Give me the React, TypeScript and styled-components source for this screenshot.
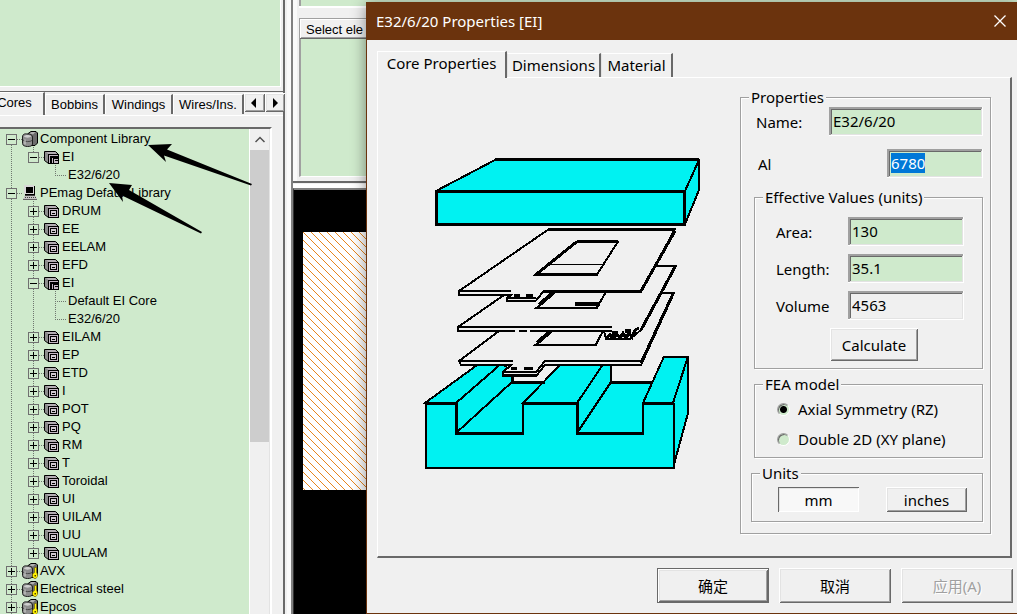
import React, { useEffect, useRef } from 'react';
import styled, { createGlobalStyle, css } from 'styled-components';

const face = '#f0f0f0';
const mint = '#cfeacc';
const shade = '#a0a0a0';
const dark = '#696969';
const light = '#e3e3e3';

const raised = css`
  box-shadow: inset 1px 1px #fff, inset -1px -1px ${dark}, inset 2px 2px ${light}, inset -2px -2px ${shade};
`;
const sunken = css`
  box-shadow: inset -1px -1px #fff, inset 2px 2px ${shade}, inset -2px -2px ${light}, inset 3px 3px ${dark};
`;

const GlobalStyle = createGlobalStyle`
  * { box-sizing: border-box; }
  body { margin: 0; background: ${face}; overflow: hidden; }
  button, input { font: inherit; color: inherit; border: 0; padding: 0; margin: 0; border-radius: 0; }
  ul { list-style: none; margin: 0; padding: 0; }
`;

const Desktop = styled.div`
  position: relative;
  display: flex;
  height: 100vh;
  overflow: hidden;
  background: ${face};
  color: #000;
  font: 13px/18px "Liberation Sans", Arial, sans-serif;
`;

/* ---------- library side bar ---------- */

const Sidebar = styled.aside`
  display: flex;
  flex-direction: column;
  flex: none;
  width: 285px;
  border-right: 2px solid ${dark};
`;

const Preview = styled.div`
  flex: none;
  height: 91px;
  background: ${mint};
  border: solid ${face};
  border-width: 0 2px 4px 0;
  box-shadow: inset -1px -1px #fff;
`;

const PreviewEdge = styled.div`
  flex: none;
  height: 1px;
  background: ${dark};
`;

const LibraryTabs = styled.div`
  display: flex;
  align-items: flex-start;
  flex: none;
  height: 23px;
  margin-left: -8px;
  margin-right: -2px;
`;

const LibraryTab = styled.button<{ $active?: boolean; $width: number }>`
  width: ${p => p.$width}px;
  height: ${p => (p.$active ? 23 : 20)}px;
  margin-top: ${p => (p.$active ? 0 : 2)}px;
  padding: ${p => (p.$active ? '0 7px 3px 0' : '0')};
  background: ${face};
  border-top: 1px solid #fff;
  border-left: 1px solid #fff;
  border-right: 2px solid ${dark};
  white-space: nowrap;
  text-align: center;
`;

const SpinButton = styled.button`
  flex: 1;
  height: 19px;
  margin-top: 1px;
  background: ${face};
  display: grid;
  place-items: center;
  ${raised}
`;

const LibraryPage = styled.div`
  flex: 1;
  min-height: 0;
  display: flex;
  border-top: 1px solid #fff;
  padding: 11px 11px 0 0;
`;

const TreeFrame = styled.div`
  flex: 1;
  min-width: 0;
  display: flex;
  border-top: 2px solid ${dark};
  border-right: 2px solid #fff;
  background: ${mint};
`;

const Tree = styled.ul`
  flex: 1;
  min-width: 0;
  overflow: hidden;
`;

const TreeRow = styled.li`
  display: flex;
  height: 18px;
  white-space: nowrap;
`;

const TreeIcon = styled.span`
  flex: none;
  width: 16px;
  height: 18px;
  margin-right: 2px;
  svg { display: block; }
`;

const TreeLabel = styled.span<{ $leaf: boolean }>`
  padding-left: ${p => (p.$leaf ? 2 : 0)}px;
  line-height: 20px;
`;

const Expander = styled.button`
  flex: none;
  width: 22px;
  height: 18px;
  background: none;
  svg { display: block; }
`;

const Guide = styled.span`
  flex: none;
  width: 22px;
  height: 18px;
  svg { display: block; }
`;

const ScrollBar = styled.div`
  flex: none;
  display: flex;
  flex-direction: column;
  width: 21px;
  background: ${face};
  border-left: 1px solid #fff;
  border-right: 1px solid ${light};
`;

const ScrollUp = styled.button`
  flex: none;
  height: 21px;
  background: ${face};
  display: grid;
  place-items: center;
`;

const ScrollTrack = styled.div`
  flex: 1;
`;

const ScrollThumb = styled.div`
  width: 19px;
  height: 63%;
  background: #cdcdcd;
`;

/* ---------- work area ---------- */

const WorkArea = styled.main`
  flex: 1;
  min-width: 0;
  display: flex;
  flex-direction: column;
  margin-left: 6px;
  border-left: 2px solid #808080;
  box-shadow: -4px 0 0 #fafafa;
`;

const UpperPanes = styled.div`
  flex: none;
  display: flex;
  flex-direction: column;
  height: 183px;
  padding: 0 0 4px 6px;
  border-bottom: 2px solid ${dark};
  box-shadow: inset 4px 0 #fafafa;
`;

const PaneStrip = styled.div`
  height: 6px;
  margin-bottom: 12px;
  background: ${mint};
  border-left: 2px solid ${shade};
  box-shadow: 0 2px #fff;
`;

const ListHeader = styled.div`
  height: 21px;
  padding: 3px 6px 0;
  border-left: 1px solid ${shade};
  background: ${face};
  box-shadow: inset 0 1px ${shade}, inset 0 -1px ${dark}, inset 1px 2px #fff, inset 0 -2px ${shade};
`;

const ListBody = styled.div`
  flex: 1;
  background: ${mint};
  border-left: 2px solid ${shade};
  border-bottom: 1px solid #fff;
`;

const Canvas = styled.div`
  flex: 1;
  margin-top: 5px;
  padding: 42px 0 0 9px;
  background: #000;
  border-top: 2px solid #808080;
  border-left: 1px solid #333;
  box-shadow: 0 -4px #fff;
  svg { display: block; width: 100%; height: 258px; }
`;

/* ---------- properties dialog ---------- */

const Dialog = styled.section`
  position: absolute;
  top: 2px;
  left: 366px;
  right: 0;
  border-left: 1px solid #6b330d;
  border-bottom: 1px solid #6b330d;
  background: ${face};
  box-shadow: 0 2px 14px rgba(0, 0, 0, 0.45);
  font: 15px/20px "Noto Sans", "Noto Sans CJK SC", sans-serif;
`;

const TitleBar = styled.header`
  display: flex;
  align-items: center;
  justify-content: space-between;
  height: 38px;
  padding: 0 10px 0 9px;
  background: #6b330d;
  color: #fff;
`;

const Title = styled.h1`
  margin: 0;
  font: inherit;
`;

const CloseButton = styled.button`
  width: 14px;
  height: 14px;
  background: none;
  svg { display: block; }
`;

const DialogBody = styled.div`
  padding: 11px 5px 0 10px;
`;

const DialogTabs = styled.div`
  display: flex;
  align-items: flex-end;
  height: 26px;
`;

const DialogTab = styled.button<{ $active?: boolean; $width: number }>`
  position: relative;
  width: ${p => p.$width}px;
  height: ${p => (p.$active ? 27 : 24)}px;
  margin-bottom: ${p => (p.$active ? -1 : 0)}px;
  padding-bottom: ${p => (p.$active ? 5 : 2)}px;
  background: ${face};
  border-top: 1px solid #fff;
  border-left: 1px solid ${p => (p.$active ? '#fff' : light)};
  border-right: 2px solid ${dark};
  white-space: nowrap;
`;

const TabPage = styled.div`
  display: flex;
  justify-content: space-between;
  align-items: flex-start;
  padding: 10px 19px 22px 42px;
  border-top: 1px solid #fff;
  border-left: 1px solid #fff;
  border-right: 2px solid ${dark};
  border-bottom: 2px solid ${dark};
`;

const CoreDrawing = styled.svg`
  flex: none;
  margin-top: 64px;
`;

const Group = styled.fieldset<{ $pad: string; $width?: number; $indent?: number; $gap?: number; $top?: number }>`
  display: flex;
  flex-direction: column;
  gap: ${p => p.$gap ?? 0}px;
  min-width: 0;
  width: ${p => (p.$width ? `${p.$width}px` : 'auto')};
  margin: ${p => p.$top ?? 0}px 0 0 ${p => p.$indent ?? 0}px;
  padding: ${p => p.$pad};
  border: 1px solid ${shade};
  box-shadow: 1px 1px #fff, inset 1px 1px #fff;
`;

const Legend = styled.legend<{ $shift?: number }>`
  height: 19px;
  margin-left: ${p => p.$shift ?? 0}px;
  padding: 0 2px;
  line-height: 19px;
  background: ${face};
`;

const Field = styled.div<{ $indent: number; $after?: number }>`
  display: flex;
  align-items: center;
  justify-content: space-between;
  height: 29px;
  padding-left: ${p => p.$indent}px;
  margin-bottom: ${p => p.$after ?? 0}px;
`;

const TextBox = styled.input<{ $width: number }>`
  width: ${p => p.$width}px;
  height: 29px;
  padding: 2px 4px 4px;
  outline: none;
  background: ${mint};
  ${sunken}
  &:read-only { background: ${face}; }
  &::selection { background: #0078d7; color: #fff; }
`;

const PushButton = styled.button<{ $width: number; $height: number; $primary?: boolean }>`
  width: ${p => p.$width}px;
  height: ${p => p.$height}px;
  background: ${face};
  ${raised}
  ${p => p.$primary && css`
    border: 1px solid ${dark};
  `}
  &[aria-pressed='true'] {
    background: #f8f8f8;
    box-shadow: inset 1px 1px ${dark}, inset -1px -1px #fff, inset 2px 2px ${light};
  }
  &:disabled {
    color: ${shade};
    text-shadow: 1px 1px #fff;
  }
`;

const CalculateRow = styled.div`
  display: flex;
  margin-left: 75px;
`;

const RadioRow = styled.label`
  display: flex;
  align-items: center;
  gap: 8px;
  height: 20px;
  white-space: nowrap;
`;

const Radio = styled.input`
  appearance: none;
  width: 13px;
  height: 13px;
  border: 1px solid;
  border-color: ${shade} #fff #fff ${shade};
  border-radius: 50%;
  background: ${mint};
  box-shadow: inset 1px 1px ${dark};
  &:checked {
    background: radial-gradient(circle, #000 0 3px, ${mint} 4px);
  }
`;

const ButtonPair = styled.div`
  display: flex;
  justify-content: space-between;
`;

const Footer = styled.footer`
  display: flex;
  justify-content: flex-end;
  gap: 10px;
  padding: 10px 4px 10px;
`;

const Annotations = styled.svg`
  position: absolute;
  left: 0;
  top: 0;
  pointer-events: none;
`;

/* ---------- tree data ---------- */

type Kind = 'library' | 'locked' | 'computer' | 'core' | 'open' | 'leaf';
type Node = { label: string; level: number; kind: Kind };

const n = (level: number, kind: Kind, label: string): Node => ({ level, kind, label });

const nodes: Node[] = [
  n(0, 'library', 'Component Library'),
  n(1, 'open', 'EI'),
  n(2, 'leaf', 'E32/6/20'),
  n(0, 'computer', 'PEmag Default Library'),
  ...['DRUM', 'EE', 'EELAM', 'EFD'].map(t => n(1, 'core', t)),
  n(1, 'open', 'EI'),
  n(2, 'leaf', 'Default EI Core'),
  n(2, 'leaf', 'E32/6/20'),
  ...['EILAM', 'EP', 'ETD', 'I', 'POT', 'PQ', 'RM', 'T', 'Toroidal', 'UI', 'UILAM', 'UU', 'UULAM'].map(t => n(1, 'core', t)),
  n(0, 'locked', 'AVX'),
  n(0, 'locked', 'Electrical steel'),
  n(0, 'locked', 'Epcos'),
];

const continues = (index: number, level: number) => {
  for (let i = index + 1; i < nodes.length; i++) {
    if (nodes[i].level === level) return true;
    if (nodes[i].level < level) return false;
  }
  return level === 0;
};

function GuideLines({ up, down, across, box }: { up: boolean; down: boolean; across: boolean; box?: 'plus' | 'minus' }) {
  return (
    <svg width="22" height="18" shapeRendering="crispEdges" fill="none" stroke="#707870" aria-hidden="true">
      {up && <path d="M11.5 0V10" strokeDasharray="1 1" />}
      {down && <path d="M11.5 10V18" strokeDasharray="1 1" />}
      {across && <path d="M11 10.5H22" strokeDasharray="1 1" />}
      {box && (
        <>
          <rect x="6.5" y="5.5" width="10" height="10" fill={mint} stroke="#707070" />
          <path d={box === 'plus' ? 'M8 10.5h7M11.5 7v7' : 'M8 10.5h7'} stroke="#000" />
        </>
      )}
    </svg>
  );
}

function KindIcon({ kind }: { kind: Kind }) {
  if (kind === 'core' || kind === 'open') {
    return (
      <svg width="16" height="18" aria-hidden="true">
        <path d="M.5 4.500H11.500L14.500 7.500V16.500H4.500L.5 13.500z" fill="#8c8c8c" stroke="#000" />
        <path d="M2 5H11L13 7H4.500z" fill="#b4aeb4" />
        <g shapeRendering="crispEdges">
          <rect x="4.500" y="7.500" width="10" height="9" fill="#c4b8c4" stroke="#000" />
          {kind === 'core' ? (
            <>
              <rect x="6.500" y="9.500" width="6" height="5" fill="#d0c8d0" stroke="#000" />
              <path d="M8 12h3" stroke="#000" />
            </>
          ) : (
            <>
              <path d="M6 9h8v2H8v5H6z" fill="#000" />
              <path d="M9 11.500h5M9.500 11v5M11 13.500h3" stroke="#000" />
            </>
          )}
        </g>
      </svg>
    );
  }
  if (kind === 'computer') {
    return (
      <svg width="16" height="18" shapeRendering="crispEdges" aria-hidden="true">
        <path d="M3 3h10v9H3z" fill="#000" />
        <path d="M2 2h10v9H2z" fill="#d8d8d8" />
        <path d="M4 4h7v6H4z" fill="#000" />
        <path d="M3 12h10l2 4H1z" fill="#c4c4c4" />
        <path d="M3 12.500h10M3 14.500h1m1 0h1m1 0h1m1 0h1m1 0h1m1 0h1" stroke="#404040" />
        <path d="M1 16.500h14" stroke="#606060" />
      </svg>
    );
  }
  return (
    <svg width="16" height="18" aria-hidden="true">
      <path d="M5.500 5L9 2.500H14L15.500 4V14L13 16.500H9z" fill="#6c6c6c" stroke="#000" />
      <path d="M7 4.500L9.500 3H13.500L11 5.500z" fill="#b0b0b0" />
      <path d="M.5 8C.5 5 3 4.500 5 5C8 4.500 10.500 6 10.500 8V15C10.500 17 8 17.500 5.500 17.500C3 17.500 .5 16.500 .5 14.500z" fill="#8e8e8e" stroke="#202020" />
      <path d="M2 7.500C3 5.500 8 5.500 9 7.500C8 9 3 9 2 7.500z" fill="#cecece" />
      <path d="M1 11C3 13 8 13 10 11.500" fill="none" stroke="#484848" />
      <path d="M3 10.500V15.500" stroke="#d4d4d4" />
      {kind === 'locked' && (
        <>
          <path d="M12.500 6.500H14.500V11.500L15.500 13V15.500L14 17.500H12L10.500 15.500V13L12.500 11.500z" fill="#fff000" stroke="#504800" strokeWidth=".5" />
          <path d="M12.500 14h1.500v1.500h-1.500z" fill="#504800" />
        </>
      )}
    </svg>
  );
}

function LibraryTree() {
  return (
    <Tree>
      {nodes.map((node, i) => {
        const leaf = node.kind === 'leaf';
        const lines = {
          up: i > 0,
          down: continues(i, node.level),
          across: true,
        };
        return (
          <TreeRow key={i}>
            {Array.from({ length: node.level }, (_, l) => {
              const on = continues(i, l);
              return (
                <Guide key={l}>
                  <GuideLines up={on} down={on} across={false} />
                </Guide>
              );
            })}
            {leaf ? (
              <Guide>
                <GuideLines {...lines} />
              </Guide>
            ) : (
              <Expander aria-label={`Toggle ${node.label}`}>
                <GuideLines
                  {...lines}
                  box={node.kind === 'core' || node.kind === 'locked' ? 'plus' : 'minus'}
                />
              </Expander>
            )}
            {!leaf && (
              <TreeIcon>
                <KindIcon kind={node.kind} />
              </TreeIcon>
            )}
            <TreeLabel $leaf={leaf}>{node.label}</TreeLabel>
          </TreeRow>
        );
      })}
    </Tree>
  );
}

/* ---------- exploded core drawing ---------- */

function ExplodedCore() {
  return (
    <CoreDrawing width="286" height="322" viewBox="420 152 286 322" role="img" aria-label="EI core exploded view">
      <g fill="#00f2f2" stroke="#000" strokeWidth="2" shapeRendering="crispEdges">
        <path d="M436 191L495 160H699L685 191z" />
        <path d="M685 191L699 160V190L685 224z" />
        <path d="M495 159.500H699" strokeWidth="3" />
        <rect x="436.500" y="191.500" width="248" height="33" strokeWidth="3" />

        <path d="M425 403L480 363H502L456 403z" />
        <path d="M456 403L502 363L512 372V382L456 433z" />
        <path d="M456 433L512 382H545L523 403V433z" />
        <path d="M512 364L562 364L545 381H512z" fill={face} stroke="none" />
        <path d="M523 403L562 363H604L577 403z" />
        <path d="M577 403L604 363H611V382L577 433z" />
        <path d="M577 433L611 382H653L643 403V433z" />
        <path d="M512 382H545M611 382H653" strokeWidth="3" />
        <path d="M512.500 374V382" />
        <path d="M643 403L664 356.500H688L673 403z" />
        <path d="M673 403L688 356.500V413L673 468z" />
        <path d="M425.500 403.500H456V433.500H523V403.500H577V433.500H643V403.500H673.500V468H425.500z" />
        <path d="M456 403V433.500H523M577 403V433.500H643" fill="none" strokeWidth="3" />
      </g>

      <g fill={face} stroke="#000" strokeWidth="2" shapeRendering="crispEdges">
        <path d="M459 361L499 331L550 293H674L641 365H545L536 376H503V372L511 365H461z" />
        <path d="M673 294L641 363" strokeWidth="3" />
        <path d="M459 361H513M503 372H536L545 361H641" fill="none" />
        <path d="M503 375.500H536" fill="none" strokeWidth="3" />
        <path d="M511 368h6M524 368h9" strokeWidth="3" />
        <path d="M536 344.500L556 327H605L596 344.500z" />
        <path d="M537 343L552 330" strokeWidth="4" />

        <path d="M458 327L504 295L549 266H676L641 330L630 339H606L604 331H458z" />
        <path d="M675 267L641 330" strokeWidth="3" />
        <path d="M458 327H612M458 331H612" fill="none" />
        <path d="M606 338l4-3 3 3 4-4 3 4 3-5 3 5 3-5 3 4 3-7 4-2" fill="none" strokeWidth="3" />
        <path d="M612 333h6M625 331h6" strokeWidth="4" />
        <path d="M537 307.500L557 290H607L597 307.500z" />
        <path d="M539 305L554 292" strokeWidth="4" />
        <path d="M575 303.500H600" strokeWidth="4" />
        <path d="M515 331h4M527 331h3" stroke={face} />

        <path d="M459 291L549 229H675L641 292H543L536 300.500H507V298L511 295H459z" />
        <path d="M459 291H511M507 298H536" fill="none" />
        <path d="M549 229.500H675M543 291.500H641" strokeWidth="3" />
        <path d="M675 231L641 291" strokeWidth="3" />
        <path d="M514 296h6M526 296h7" strokeWidth="4" />
        <path d="M536 274.500L577 241.500H618L597 274.500z" />
        <path d="M536 274.500L577 241.500M577 241.500H618M536 274.500H597" strokeWidth="3" />
        <path d="M551 264.500H602" strokeWidth="1" />
      </g>
    </CoreDrawing>
  );
}

function PropertiesDialog() {
  const al = useRef<HTMLInputElement>(null);
  useEffect(() => {
    al.current?.focus();
    al.current?.select();
  }, []);

  return (
    <Dialog role="dialog" aria-labelledby="dialog-title">
      <TitleBar>
        <Title id="dialog-title">E32/6/20 Properties [EI]</Title>
        <CloseButton aria-label="Close">
          <svg width="14" height="14" fill="none" stroke="#fff" strokeWidth="1.300">
            <path d="M1.500 1.500l11 11M12.500 1.500l-11 11" />
          </svg>
        </CloseButton>
      </TitleBar>
      <DialogBody>
        <DialogTabs role="tablist">
          <DialogTab role="tab" aria-selected="true" $active $width={130}>Core Properties</DialogTab>
          <DialogTab role="tab" $width={94}>Dimensions</DialogTab>
          <DialogTab role="tab" $width={72}>Material</DialogTab>
        </DialogTabs>
        <TabPage>
          <ExplodedCore />
          <Group $width={251} $pad="0 7px 11px 10px">
            <Legend $shift={-2}>Properties</Legend>
            <Field $indent={5} $after={13}>
              <label htmlFor="name">Name:</label>
              <TextBox id="name" $width={154} defaultValue="E32/6/20" />
            </Field>
            <Field $indent={7} $after={10}>
              <label htmlFor="al">Al</label>
              <TextBox id="al" ref={al} $width={96} defaultValue="6780" />
            </Field>
            <Group $indent={3} $gap={8} $pad="10px 18px 7px 0">
              <Legend $shift={8}>Effective Values (units)</Legend>
              <Field $indent={21}>
                <label htmlFor="area">Area:</label>
                <TextBox id="area" $width={116} defaultValue="130" />
              </Field>
              <Field $indent={21}>
                <label htmlFor="length">Length:</label>
                <TextBox id="length" $width={116} defaultValue="35.1" />
              </Field>
              <Field $indent={21}>
                <label htmlFor="volume">Volume</label>
                <TextBox id="volume" $width={116} defaultValue="4563" readOnly />
              </Field>
              <CalculateRow>
                <PushButton $width={88} $height={33}>Calculate</PushButton>
              </CalculateRow>
            </Group>
            <Group $indent={3} $top={6} $gap={10} $pad="5px 0 8px 22px">
              <Legend $shift={-14}>FEA model</Legend>
              <RadioRow><Radio type="radio" name="fea" defaultChecked />Axial Symmetry (RZ)</RadioRow>
              <RadioRow><Radio type="radio" name="fea" />Double 2D (XY plane)</RadioRow>
            </Group>
            <Group $top={6} $pad="4px 15px 9px 26px">
              <Legend $shift={-18}>Units</Legend>
              <ButtonPair>
                <PushButton $width={81} $height={25} aria-pressed="true">mm</PushButton>
                <PushButton $width={81} $height={25} aria-pressed="false">inches</PushButton>
              </ButtonPair>
            </Group>
          </Group>
        </TabPage>
      </DialogBody>
      <Footer>
        <PushButton $width={112} $height={35} $primary>确定</PushButton>
        <PushButton $width={112} $height={35}>取消</PushButton>
        <PushButton $width={112} $height={35} disabled>应用(A)</PushButton>
      </Footer>
    </Dialog>
  );
}

export default function App() {
  return (
    <>
      <GlobalStyle />
      <Desktop>
        <Sidebar>
          <Preview />
          <PreviewEdge />
          <LibraryTabs role="tablist">
            <LibraryTab role="tab" aria-selected="true" $active $width={53}>Cores</LibraryTab>
            <LibraryTab role="tab" $width={60}>Bobbins</LibraryTab>
            <LibraryTab role="tab" $width={68}>Windings</LibraryTab>
            <LibraryTab role="tab" $width={71}>Wires/Ins.</LibraryTab>
            <SpinButton aria-label="Previous tabs">
              <svg width="6" height="10"><path d="M5 0v10L0 5z" /></svg>
            </SpinButton>
            <SpinButton aria-label="Next tabs">
              <svg width="6" height="10"><path d="M1 0v10l5-5z" /></svg>
            </SpinButton>
          </LibraryTabs>
          <LibraryPage>
            <TreeFrame>
              <LibraryTree />
              <ScrollBar>
                <ScrollUp aria-label="Scroll up">
                  <svg width="10" height="7" fill="none" stroke="#505050" strokeWidth="1.500"><path d="M.5 6L5 1.500 9.500 6" /></svg>
                </ScrollUp>
                <ScrollTrack><ScrollThumb /></ScrollTrack>
              </ScrollBar>
            </TreeFrame>
          </LibraryPage>
        </Sidebar>
        <WorkArea>
          <UpperPanes>
            <PaneStrip />
            <ListHeader>Select ele</ListHeader>
            <ListBody />
          </UpperPanes>
          <Canvas>
            <svg shapeRendering="crispEdges">
              <defs>
                <pattern id="hatch" width="8" height="8" patternUnits="userSpaceOnUse">
                  <path
                    d="M0 .5h1M1 1.500h1M2 2.500h1M3 3.500h1M4 4.500h1M5 5.500h1M6 6.500h1M7 7.500h1"
                    stroke="#e8861c"
                  />
                </pattern>
              </defs>
              <rect width="100%" height="258" fill="#fff" />
              <rect width="100%" height="258" fill="url(#hatch)" />
            </svg>
          </Canvas>
        </WorkArea>
        <PropertiesDialog />
        <Annotations width="260" height="240" aria-hidden="true">
          <path d="M148 145L172 144L167 149.500L252 184L251 185.500L164 155.500L166 162z" />
          <path d="M109 183L132 185L129 190L202 232L201 233.500L122 195.500L123 202z" />
        </Annotations>
      </Desktop>
    </>
  );
}
